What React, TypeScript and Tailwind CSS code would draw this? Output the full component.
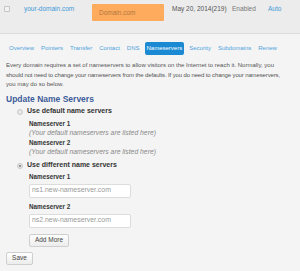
import React from "react";

const tabs = ["Overview", "Pointers", "Transfer", "Contact", "DNS", "Nameservers", "Security", "Subdomains", "Renew"];

function Radio({ checked }: { checked?: boolean }) {
  return (
    <span className="w-[6px] h-[6px] rounded-full border border-[#c8c8c8] bg-[#e8e8e8] flex items-center justify-center shrink-0">
      {checked && <span className="w-[2px] h-[2px] rounded-full bg-[#777]" />}
    </span>
  );
}

export default function App() {
  return (
    <div
      className="w-[300px] h-[271px] bg-[#f4f4f4] overflow-hidden text-[#444]"
      style={{ fontFamily: '"Liberation Sans", Arial, sans-serif' }}
    >
      {/* top row */}
      <div className="h-[34px] bg-[#ececec] border-b border-[#dcdcdc] flex items-start pt-[4px] text-[6.5px] leading-[10px]">
        <span className="ml-[4px] mt-[2px] w-[6px] h-[6px] border border-[#c4c4c4] rounded-[1px] bg-[#f3f3f3] shrink-0" />
        <span className="ml-[14px] w-[68px] text-[#3f9ad8]">your-domain.com</span>
        <div className="w-[72px] h-[17px] bg-[#ffab5e] rounded-[1px] flex items-center pl-[7px] text-[#b0773f] text-[6.5px]">
          Domain.com
        </div>
        <span className="ml-[8px] w-[60px] text-[#555]">May 20, 2014(219)</span>
        <span className="w-[36px] text-[#777]">Enabled</span>
        <span className="text-[#3f9ad8]">Auto</span>
      </div>

      {/* tabs */}
      <div className="mt-[8px] pl-[7px] flex items-center gap-[3px] h-[13px] text-[6px]">
        {tabs.map((t) =>
          t === "Nameservers" ? (
            <span key={t} className="h-[13px] px-[2px] flex items-center rounded-[2px] bg-[#1b8ad3] text-white">
              {t}
            </span>
          ) : (
            <span key={t} className="px-[2px] text-[#4fa3dc]">
              {t}
            </span>
          )
        )}
      </div>

      {/* paragraph */}
      <p className="mt-[6px] pl-[6px] text-[6px] leading-[9.5px] text-[#555] whitespace-nowrap">
        <span>Every domain requires a set of nameservers to allow visitors on the Internet to reach it. Normally, you</span>
        <br />
        <span className="tracking-[-0.13px]">
          should not need to change your nameservers from the defaults. If you do need to change your nameservers,
        </span>
        <br />
        <span>you may do so below.</span>
      </p>

      <h2 className="mt-[4px] pl-[6px] text-[8.5px] leading-[10px] font-bold text-[#3d5c99]">Update Name Servers</h2>

      {/* default */}
      <div className="mt-[3px] ml-[17px] flex items-center gap-[4px] h-[10px]">
        <Radio />
        <span className="text-[7px] font-bold text-[#333]">Use default name servers</span>
      </div>
      <div className="mt-[2px] ml-[29px] text-[6.8px] leading-[9.5px]">
        <div className="font-bold text-[6.3px] text-[#333]">Nameserver 1</div>
        <div className="italic text-[#888]">(Your default nameservers are listed here)</div>
        <div className="font-bold text-[6.3px] text-[#333]">Nameserver 2</div>
        <div className="italic text-[#888]">(Your default nameservers are listed here)</div>
      </div>

      {/* different */}
      <div className="mt-[4px] ml-[17px] flex items-center gap-[4px] h-[10px]">
        <Radio checked />
        <span className="text-[7px] font-bold text-[#333]">Use different name servers</span>
      </div>
      <div className="ml-[29px] flex flex-col items-start">
        <div className="mt-[1.5px] font-bold text-[6.3px] leading-[9px] text-[#333]">Nameserver 1</div>
        <div className="mt-[2.5px] w-[102px] h-[14px] bg-white border border-[#dcdcdc] rounded-[2px] flex items-center pl-[2px] text-[6.9px] text-[#999]">
          ns1.new-nameserver.com
        </div>
        <div className="mt-[4.5px] font-bold text-[6.3px] leading-[9px] text-[#333]">Nameserver 2</div>
        <div className="mt-[2.5px] w-[102px] h-[14px] bg-white border border-[#dcdcdc] rounded-[2px] flex items-center pl-[2px] text-[6.9px] text-[#999]">
          ns2.new-nameserver.com
        </div>
        <button className="mt-[6px] w-[40px] h-[13px] border border-[#cfcfcf] rounded-[2px] bg-gradient-to-b from-white to-[#ececec] text-[6.5px] text-[#444] flex items-center justify-center">
          Add More
        </button>
      </div>
      <button className="mt-[5px] ml-[6px] w-[27px] h-[13px] border border-[#cfcfcf] rounded-[2px] bg-gradient-to-b from-white to-[#ececec] text-[6.5px] text-[#444] flex items-center justify-center">
        Save
      </button>
    </div>
  );
}
